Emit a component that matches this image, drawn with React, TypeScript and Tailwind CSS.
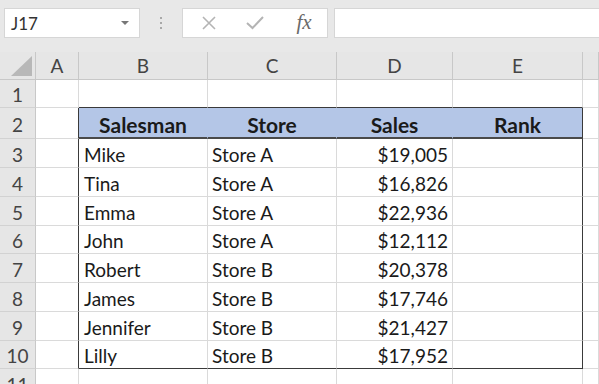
import React from 'react';

const COLS = ['A', 'B', 'C', 'D', 'E', ''];
const WIDTHS = ['w-[43px]', 'w-[129px]', 'w-[129px]', 'w-[116px]', 'w-[130px]', 'flex-1'];

const rows: { name: string; store: string; sales: string }[] = [
  { name: 'Mike', store: 'Store A', sales: '$19,005' },
  { name: 'Tina', store: 'Store A', sales: '$16,826' },
  { name: 'Emma', store: 'Store A', sales: '$22,936' },
  { name: 'John', store: 'Store A', sales: '$12,112' },
  { name: 'Robert', store: 'Store B', sales: '$20,378' },
  { name: 'James', store: 'Store B', sales: '$17,746' },
  { name: 'Jennifer', store: 'Store B', sales: '$21,427' },
  { name: 'Lilly', store: 'Store B', sales: '$17,952' },
];

const HEIGHTS: Record<number, string> = {
  1: 'h-[28px]',
  2: 'h-[31px]',
  3: 'h-[29px]',
  4: 'h-[29px]',
  5: 'h-[29px]',
  6: 'h-[28px]',
  7: 'h-[29px]',
  8: 'h-[29px]',
  9: 'h-[29px]',
  10: 'h-[28px]',
  11: 'h-[29px]',
};

function cellBorder(row: number, col: number) {
  // col index: 0=A ... 5=F
  const inTable = col >= 1 && col <= 4;
  const inRows = row >= 2 && row <= 10;
  let right = 'border-r border-r-[#dadada]';
  if (row === 2 && col >= 1 && col <= 3) right = 'border-r border-r-[#b4c6e7]';
  if (inRows && (col === 0 || col === 4)) right = 'border-r border-r-[#3a3a3a]';
  let bottom = 'border-b border-b-[#dadada]';
  if (inTable && (row === 1 || row === 10)) bottom = 'border-b border-b-[#3a3a3a]';
  if (inTable && row === 2) bottom = 'border-b-2 border-b-[#4a4a4a]';
  return `${right} ${bottom}`;
}

function Row({ n, cells }: { n: number; cells: React.ReactNode[] }) {
  return (
    <div className={`flex ${HEIGHTS[n]}`}>
      <div className="w-[36px] shrink-0 flex items-center justify-center pt-[4px] bg-[#e6e6e6] border-r border-r-[#c8c8c8] border-b border-b-[#d2d2d2] text-[19px] text-[#444]">
        {n}
      </div>
      {COLS.map((c, i) => {
        const bg = n === 2 && i >= 1 && i <= 4 ? 'bg-[#b4c6e7]' : 'bg-white';
        return (
          <div key={i} className={`${WIDTHS[i]} shrink-0 flex items-center pt-[4px] ${bg} ${cellBorder(n, i)}`}>
            {cells[i]}
          </div>
        );
      })}
    </div>
  );
}

export default function App() {
  return (
    <div className="w-[599px] h-[384px] overflow-hidden bg-[#e8e8e8] font-['Lato',sans-serif] text-[#1a1a1a]">
      {/* formula bar */}
      <div className="h-[52px] flex items-start pt-[8px] pl-[4px]">
        <div className="w-[136px] h-[30px] bg-white border border-[#d6d6d6] flex items-center justify-between pl-[6px] pr-[10px]">
          <span className="text-[17px] text-[#333] pt-[2px]">J17</span>
          <svg width="8" height="5" viewBox="0 0 8 5">
            <path d="M0 0 L8 0 L4 4 Z" fill="#777" />
          </svg>
        </div>
        <div className="w-[42px] h-[30px] flex flex-col items-center justify-center gap-[3px]">
          <div className="w-[2px] h-[2px] bg-[#a8a8a8]" />
          <div className="w-[2px] h-[2px] bg-[#a8a8a8]" />
          <div className="w-[2px] h-[2px] bg-[#a8a8a8]" />
        </div>
        <div className="w-[146px] h-[30px] bg-white border border-[#d6d6d6] flex items-center">
          <div className="w-[50px] flex justify-center pl-[2px]">
            <svg width="16" height="16" viewBox="0 0 16 16">
              <path d="M2 2 L14 14 M14 2 L2 14" stroke="#b4b4b4" strokeWidth="1.6" />
            </svg>
          </div>
          <div className="w-[44px] flex justify-center">
            <svg width="18" height="14" viewBox="0 0 18 14">
              <path d="M1 7 L6.5 12 L17 1" stroke="#b4b4b4" strokeWidth="2" fill="none" />
            </svg>
          </div>
          <div className="flex-1 flex justify-center pl-[4px]">
            <span className="font-['Liberation_Serif',serif] italic text-[21px] text-[#6a6a6a]">fx</span>
          </div>
        </div>
        <div className="ml-[6px] flex-1 h-[30px] bg-white border border-[#d6d6d6] border-r-0" />
      </div>

      {/* column headers */}
      <div className="flex h-[28px]">
        <div className="w-[36px] shrink-0 bg-[#e6e6e6] border-r border-r-[#c8c8c8] border-b border-b-[#c8c8c8] flex items-end justify-end pb-[3px] pr-[3px]">
          <svg width="21" height="20" viewBox="0 0 21 20">
            <path d="M21 0 L21 20 L0 20 Z" fill="#b8b8b8" />
          </svg>
        </div>
        {COLS.map((c, i) => (
          <div
            key={i}
            className={`${WIDTHS[i]} shrink-0 flex items-center justify-center bg-[#e6e6e6] border-r border-r-[#c8c8c8] border-b border-b-[#c8c8c8] text-[19px] text-[#444] pt-[2px]`}
          >
            {c}
          </div>
        ))}
      </div>

      <Row n={1} cells={[]} />
      <Row
        n={2}
        cells={[
          null,
          <span className="w-full text-center font-bold text-[21px]">Salesman</span>,
          <span className="w-full text-center font-bold text-[21px]">Store</span>,
          <span className="w-full text-center font-bold text-[21px]">Sales</span>,
          <span className="w-full text-center font-bold text-[21px]">Rank</span>,
        ]}
      />
      {rows.map((r, idx) => (
        <Row
          key={r.name}
          n={idx + 3}
          cells={[
            null,
            <span className="pl-[5px] text-[19px]">{r.name}</span>,
            <span className="pl-[4px] text-[19px]">{r.store}</span>,
            <span className="w-full text-right pr-[4px] text-[19px]">{r.sales}</span>,
          ]}
        />
      ))}
      <Row n={11} cells={[]} />
    </div>
  );
}
